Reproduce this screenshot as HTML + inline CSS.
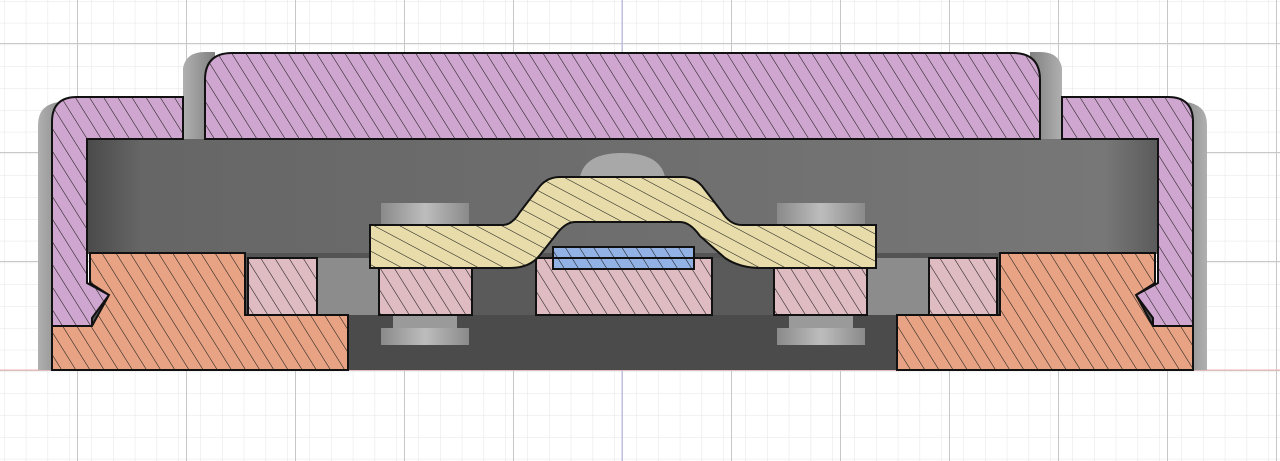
<!DOCTYPE html>
<html><head><style>
html,body{margin:0;padding:0;width:1280px;height:461px;overflow:hidden;background:#fff}
svg{display:block}
</style></head><body>
<svg width="1280" height="461" viewBox="0 0 1280 461" xmlns="http://www.w3.org/2000/svg">
<defs>
<pattern id="gmin" x="4" y="1" width="21.8" height="21.8" patternUnits="userSpaceOnUse">
<path d="M0 0H21.8M0 0V21.8" stroke="#e4e4e4" stroke-width="1" fill="none"/>
</pattern>
<pattern id="gmaj" x="77" y="43" width="109" height="109" patternUnits="userSpaceOnUse">
<path d="M0 0.5H109M0.5 0V109" stroke="#c8c8c8" stroke-width="1" fill="none"/>
</pattern>
<pattern id="h1" width="12" height="12" patternUnits="userSpaceOnUse" patternTransform="rotate(-32)">
<line x1="0" y1="0" x2="0" y2="12" stroke="#1a1a1a" stroke-width="1.1"/>
</pattern>
<pattern id="h2" width="12" height="12" patternUnits="userSpaceOnUse" patternTransform="rotate(-62)">
<line x1="0" y1="0" x2="0" y2="12" stroke="#1a1a1a" stroke-width="1.1"/>
</pattern>
<linearGradient id="band" x1="0" y1="0" x2="1" y2="0">
<stop offset="0" stop-color="#4a4a4a"/><stop offset="0.05" stop-color="#666"/><stop offset="0.5" stop-color="#6e6e6e"/><stop offset="0.95" stop-color="#777"/><stop offset="1" stop-color="#5a5a5a"/>
</linearGradient>
<linearGradient id="cyl" x1="0" y1="0" x2="1" y2="0">
<stop offset="0" stop-color="#8a8a8a"/><stop offset="0.5" stop-color="#bdbdbd"/><stop offset="1" stop-color="#8a8a8a"/>
</linearGradient>
<linearGradient id="shL" x1="0" y1="0" x2="1" y2="0">
<stop offset="0" stop-color="#b0b0b0"/><stop offset="1" stop-color="#808080"/>
</linearGradient>
<linearGradient id="shR" x1="1" y1="0" x2="0" y2="0">
<stop offset="0" stop-color="#b0b0b0"/><stop offset="1" stop-color="#808080"/>
</linearGradient>
</defs>
<rect width="1280" height="461" fill="#fff"/>
<rect width="1280" height="461" fill="url(#gmin)"/>
<rect width="1280" height="461" fill="url(#gmaj)"/>
<line x1="622" y1="0" x2="622" y2="461" stroke="#b8b8e8" stroke-width="1"/>
<line x1="0" y1="370" x2="1280" y2="370" stroke="#f0b0b0" stroke-width="1"/>

<!-- gray shadows -->
<path d="M38 370V125Q38 104 60 102H70V370Z" fill="url(#shL)"/>
<path d="M183 139V68Q186 52 205 52H215V139Z" fill="url(#shL)"/>
<path d="M1207 370V125Q1207 104 1185 102H1175V370Z" fill="url(#shR)"/>
<path d="M1062 139V68Q1059 52 1040 52H1030V139Z" fill="url(#shR)"/>

<!-- dark band -->
<rect x="87" y="139" width="1072" height="115" fill="url(#band)"/>
<!-- bottom dark -->
<rect x="90" y="253" width="1065" height="117" fill="#545454"/>
<rect x="348" y="315" width="550" height="55" fill="#4b4b4b"/>
<rect x="317" y="258" width="62" height="57" fill="#8c8c8c"/>
<rect x="867" y="258" width="62" height="57" fill="#8c8c8c"/>
<rect x="472" y="258" width="64" height="57" fill="#5a5a5a"/>
<rect x="712" y="258" width="62" height="57" fill="#5a5a5a"/>
<!-- cylinders -->
<rect x="381" y="203" width="88" height="24" fill="url(#cyl)"/>
<rect x="777" y="203" width="88" height="24" fill="url(#cyl)"/>
<rect x="381" y="328" width="88" height="17" fill="url(#cyl)"/>
<rect x="777" y="328" width="88" height="17" fill="url(#cyl)"/>
<rect x="393" y="315" width="64" height="13" fill="#9a9a9a"/>
<rect x="789" y="315" width="64" height="13" fill="#9a9a9a"/>
<path d="M580 177Q585 153 622 153Q660 153 665 177Z" fill="#a8a8a8"/>

<g stroke="#111" stroke-width="2">
<path d="M205 139V80Q205 53 232 53H1013Q1040 53 1040 80V139Z" fill="#cfa6cf"/>
<path d="M205 139V80Q205 53 232 53H1013Q1040 53 1040 80V139Z" fill="url(#h1)" stroke="none"/>
<path d="M52 326V122Q52 97 77 97H183V139H87V283L109 295L92 318V326Z" fill="#cfa6cf"/>
<path d="M52 326V122Q52 97 77 97H183V139H87V283L109 295L92 318V326Z" fill="url(#h1)" stroke="none"/>
<path d="M1193 326V122Q1193 97 1168 97H1062V139H1158V283L1136 295L1153 318V326Z" fill="#cfa6cf"/>
<path d="M1193 326V122Q1193 97 1168 97H1062V139H1158V283L1136 295L1153 318V326Z" fill="url(#h1)" stroke="none"/>
<path d="M90 253H245V315H348V370H52V326H92L109 295L90 283Z" fill="#e8a384"/>
<path d="M90 253H245V315H348V370H52V326H92L109 295L90 283Z" fill="url(#h1)" stroke="none"/>
<path d="M1155 253H1000V315H897V370H1193V326H1153L1136 295L1155 283Z" fill="#e8a384"/>
<path d="M1155 253H1000V315H897V370H1193V326H1153L1136 295L1155 283Z" fill="url(#h1)" stroke="none"/>
<g fill="#dfbcc2">
<rect x="248" y="258" width="69" height="57"/>
<rect x="929" y="258" width="68" height="57"/>
<rect x="379" y="258" width="93" height="57"/>
<rect x="536" y="258" width="176" height="57"/>
<rect x="774" y="258" width="93" height="57"/>
</g>
<g fill="url(#h1)">
<rect x="248" y="258" width="69" height="57"/>
<rect x="929" y="258" width="68" height="57"/>
<rect x="379" y="258" width="93" height="57"/>
<rect x="536" y="258" width="176" height="57"/>
<rect x="774" y="258" width="93" height="57"/>
</g>
<rect x="553" y="247" width="141" height="22" fill="#92b2e6"/>
<rect x="553" y="247" width="141" height="22" fill="url(#h1)" stroke="none"/>
<line x1="553" y1="258" x2="694" y2="258"/>
<path d="M370 225H503Q512 225 520 212L540 186Q548 177 560 177H682Q694 177 702 186L722 212Q730 225 742 225H876V268H760Q740 268 725 258L700 236Q690 222 680 222H575Q565 222 555 236L540 255Q530 268 510 268H370Z" fill="#e8ddaa"/>
<path d="M370 225H503Q512 225 520 212L540 186Q548 177 560 177H682Q694 177 702 186L722 212Q730 225 742 225H876V268H760Q740 268 725 258L700 236Q690 222 680 222H575Q565 222 555 236L540 255Q530 268 510 268H370Z" fill="url(#h2)" stroke="none"/>
</g>
</svg>
</body></html>
